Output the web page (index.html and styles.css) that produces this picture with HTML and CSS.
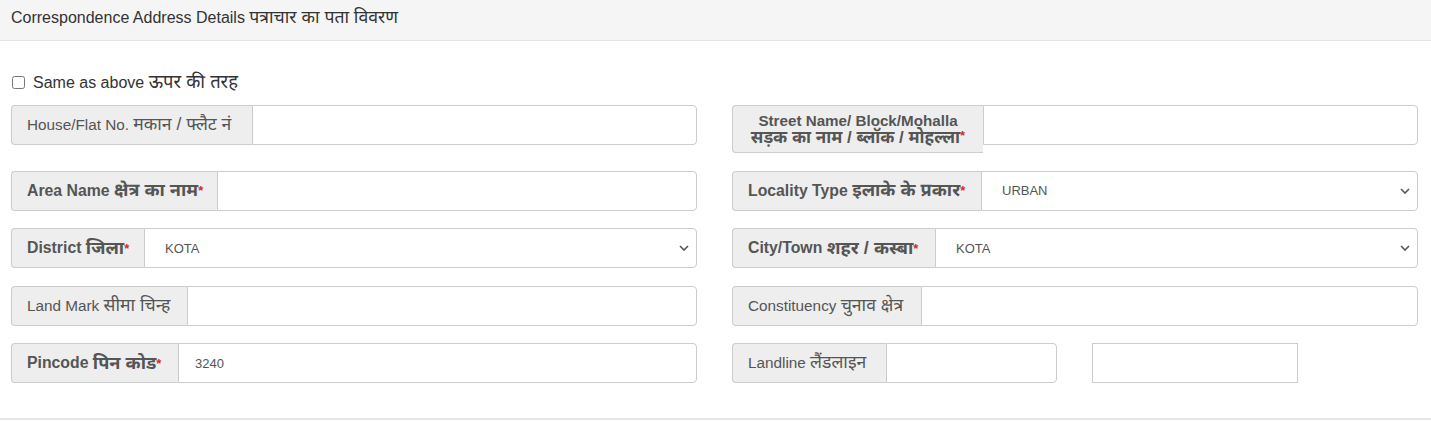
FILE: index.html
```html
<!DOCTYPE html>
<html lang="hi">
<head>
<meta charset="utf-8">
<title>Correspondence Address Details</title>
<link rel="stylesheet" href="styles.css">
</head>
<body>
<div class="panel">
  <div class="panel-heading">Correspondence Address Details <span class="hi hi-h">पत्राचार का पता विवरण</span></div>
  <div class="panel-body">
    <label class="same"><input type="checkbox" class="chk"> <span>Same as above <span class="hi">ऊपर की तरह</span></span></label>
    <div class="grid">
      <div class="ig">
        <span class="addon w-house">House/Flat No.&nbsp;<span class="hi">मकान / फ्लैट नं</span></span>
        <input class="ctl" type="text">
      </div>
      <div class="ig ig-top">
        <span class="addon addon-2 b w-street">Street Name/ Block/Mohalla<br><span class="hi">सड़क का नाम / ब्लॉक / मोहल्ला</span><i class="req">*</i></span>
        <input class="ctl" type="text">
      </div>

      <div class="ig">
        <span class="addon b w-area">Area Name&nbsp;<span class="hi">क्षेत्र का नाम</span><i class="req">*</i></span>
        <input class="ctl" type="text">
      </div>
      <div class="ig">
        <span class="addon b w-loc">Locality Type&nbsp;<span class="hi">इलाके के प्रकार</span><i class="req">*</i></span>
        <span class="sel-wrap">
          <select class="ctl sel"><option>URBAN</option></select>
          <svg class="chev" width="10" height="6" viewBox="0 0 10 6"><path d="M1 1l4 4 4-4" fill="none" stroke="#555" stroke-width="1.6"/></svg>
        </span>
      </div>

      <div class="ig">
        <span class="addon b w-dist">District&nbsp;<span class="hi">जिला</span><i class="req">*</i></span>
        <span class="sel-wrap">
          <select class="ctl sel"><option>KOTA</option></select>
          <svg class="chev" width="10" height="6" viewBox="0 0 10 6"><path d="M1 1l4 4 4-4" fill="none" stroke="#555" stroke-width="1.6"/></svg>
        </span>
      </div>
      <div class="ig">
        <span class="addon b w-city">City/Town&nbsp;<span class="hi">शहर / कस्बा</span><i class="req">*</i></span>
        <span class="sel-wrap">
          <select class="ctl sel"><option>KOTA</option></select>
          <svg class="chev" width="10" height="6" viewBox="0 0 10 6"><path d="M1 1l4 4 4-4" fill="none" stroke="#555" stroke-width="1.6"/></svg>
        </span>
      </div>

      <div class="ig">
        <span class="addon w-land">Land Mark&nbsp;<span class="hi">सीमा चिन्ह</span></span>
        <input class="ctl" type="text">
      </div>
      <div class="ig">
        <span class="addon w-cons">Constituency&nbsp;<span class="hi">चुनाव क्षेत्र</span></span>
        <input class="ctl" type="text">
      </div>

      <div class="ig">
        <span class="addon b w-pin">Pincode&nbsp;<span class="hi">पिन कोड</span><i class="req">*</i></span>
        <input class="ctl" type="text" value="3240">
      </div>
      <div class="split">
        <div class="ig ig-land">
          <span class="addon w-lline">Landline&nbsp;<span class="hi">लैंडलाइन</span></span>
          <input class="ctl" type="text">
        </div>
        <input class="ctl plain" type="text">
      </div>
    </div>
  </div>
  <div class="rule"></div>
</div>
</body>
</html>
```

FILE: styles.css
```css
* { box-sizing: border-box; }
html, body { margin: 0; padding: 0; background: #fff; }
body {
  font-family: "Liberation Sans", Arial, "Noto Sans Devanagari", "Noto Sans", sans-serif;
  color: #333;
  width: 1431px;
  height: 428px;
  overflow: hidden;
}
.hi {
  font-size: 1.15em;
  line-height: 1;
}
.hi-h { font-size: 1.1em; }
.panel-heading {
  height: 41px;
  background: #f5f5f5;
  border-bottom: 1px solid #e3e3e3;
  padding: 8px 11px 0;
  font-size: 16px;
  line-height: 20px;
  color: #333;
}
.panel-body {
  padding: 30px 13px 0 11px;
}
.same {
  display: flex;
  align-items: center;
  height: 22px;
  font-size: 16px;
  color: #333;
  gap: 8px;
}
.chk {
  margin: 0 0 0 1px;
  width: 13px;
  height: 13px;
}
.grid {
  margin-top: 12px;
  display: grid;
  grid-template-columns: 686px 686px;
  column-gap: 35px;
  row-gap: 17.5px;
  align-items: start;
}
.ig {
  display: flex;
  height: 40px;
}
.ig-top { height: 48px; align-items: flex-start; }
.addon {
  flex: none;
  display: flex;
  align-items: center;
  justify-content: flex-start;
  height: 40px;
  padding: 0 14px 0 15px;
  background: #eee;
  border: 1px solid #ccc;
  border-right: 0;
  border-radius: 4px 0 0 4px;
  font-size: 15.3px;
  color: #555;
  white-space: nowrap;
}
.addon.b { font-weight: bold; font-size: 15.8px; }
.addon-2.b {
  height: 48px;
  display: block;
  text-align: center;
  font-size: 15.2px;
  line-height: 15px;
  padding: 7px 8px 0;
}
.addon-2 .hi { line-height: 15px; font-size: 1.12em; }
.req { font-style: normal; color: #c9302c; font-weight: bold; font-size: 13px; vertical-align: 3px; }
.ctl {
  flex: 1;
  min-width: 0;
  height: 40px;
  margin: 0;
  border: 1px solid #ccc;
  border-radius: 0 4px 4px 0;
  background: #fff;
  font-family: inherit;
  font-size: 13px;
  color: #555;
  padding: 0 16px;
  outline: none;
}
.sel-wrap {
  flex: 1;
  display: flex;
  position: relative;
}
.sel {
  -webkit-appearance: none;
  appearance: none;
  padding-left: 20px;
}
.chev {
  position: absolute;
  right: 8px;
  top: 17px;
}
.w-house { width: 241px; }
.w-street { width: 251px; }
.w-area { width: 206px; }
.w-loc { width: 249px; }
.w-dist { width: 133px; }
.w-city { width: 203px; }
.w-land { width: 176px; }
.w-cons { width: 189px; }
.w-pin { width: 167px; }
.w-lline { width: 154px; }
.split {
  display: flex;
  gap: 35px;
}
.ig-land { width: 325px; }
.plain {
  flex: none;
  width: 206px;
  border-radius: 0;
}
.rule {
  margin-top: 35px;
  border-top: 2px solid #e6e6e6;
}
```
